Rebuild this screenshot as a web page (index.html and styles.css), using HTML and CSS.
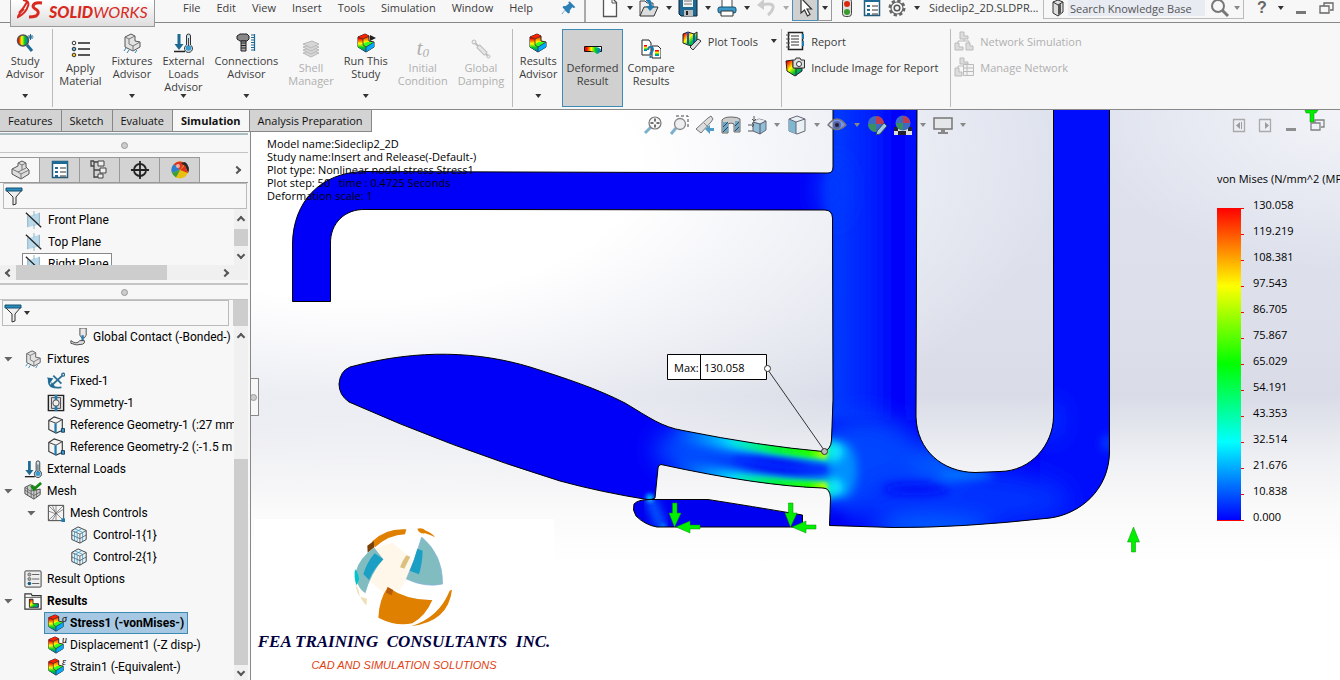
FILE: index.html
```html
<!DOCTYPE html>
<html lang="en">
<head>
    <meta charset="UTF-8">
    <meta name="viewport" content="width=device-width, initial-scale=1.0">
    <title>SOLIDWORKS - Sideclip2_2D</title>
    <link rel="stylesheet" href="styles.css">
</head>
<body>
    <!-- icon sprite -->
    <svg class="sprite" aria-hidden="true">
        <defs>
            <linearGradient id="rainbow" x1="0" y1="0" x2="1" y2="1">
                <stop offset="0.1" stop-color="#f00"/><stop offset="0.4" stop-color="#ff0"/><stop offset="0.65" stop-color="#0c2"/><stop offset="1" stop-color="#06f"/>
            </linearGradient>
            <linearGradient id="rainbow-h" x1="0" y1="0" x2="1" y2="0">
                <stop offset="0.1" stop-color="#f00"/><stop offset="0.4" stop-color="#ff0"/><stop offset="0.65" stop-color="#0c2"/><stop offset="1" stop-color="#06f"/>
            </linearGradient>
            <linearGradient id="rainbow-v" x1="0" y1="0" x2="0" y2="1">
                <stop offset="0.1" stop-color="#f00"/><stop offset="0.45" stop-color="#ff0"/><stop offset="0.7" stop-color="#0c2"/><stop offset="1" stop-color="#06f"/>
            </linearGradient>
        </defs>
        <symbol id="i-study" viewBox="0 0 20 20">
            <path d="M12 12l5 6" stroke="#1f6a94" stroke-width="3"/>
            <circle cx="8" cy="7.500" r="5.500" fill="url(#rainbow-h)" stroke="#555" stroke-width="1.500"/>
            <path d="M15.500 1v6M12.500 4h6M13.500 2l4 4M17.500 2l-4 4" stroke="#1f6a94"/>
        </symbol>
        <symbol id="i-material" viewBox="0 0 20 20">
            <path d="M8 4h12M8 10h12M8 16h12" stroke="#222" stroke-width="1.500"/>
            <circle cx="4" cy="4" r="1.800" fill="#fff" stroke="#333"/><circle cx="4" cy="10" r="1.800" fill="#5bb4e0" stroke="#333"/><circle cx="4" cy="16" r="1.800" fill="#ffc800" stroke="#333"/>
        </symbol>
        <symbol id="i-fixture" viewBox="0 0 20 20">
            <path d="M3 4l6-3 4 2v5l5 1v5l-7 4-8-4z" fill="#e2e2e2" stroke="#555"/>
            <path d="M3 4l4 2 6-3M7 6v5l4 2 7-4M11 13v5" fill="none" stroke="#777"/>
            <path d="M4 15l-2 3M7 17l-2 3M15 17l-2 3" stroke="#2d86b5"/>
        </symbol>
        <symbol id="i-loads" viewBox="0 0 20 20">
            <path d="M4.500 1h3v10h3l-4.500 6-4.500-6h3z" fill="#1f6a94"/><path d="M1 18.500h11" stroke="#222" stroke-width="1.500"/>
            <path d="M13.500 3a2 2 0 014 0v9a4 4 0 11-4 0z" fill="#cfe3ee" stroke="#333"/><circle cx="15.500" cy="15" r="2.800" fill="#3a9ccc"/><path d="M15.500 5v8" stroke="#444"/>
        </symbol>
        <symbol id="i-bolt" viewBox="0 0 20 20">
            <path d="M1 3l3-2h7l2 2v3l-2 2H4L1 6z" fill="#888" stroke="#222"/><path d="M5 8v10h5V8z" fill="#aaa" stroke="#222"/><path d="M5 10h5M5 12.500h5M5 15h5" stroke="#222"/>
            <path d="M18.500 1v17M15 2h3M15 4.500h3M15 7h3M15 9.500h3M15 12h3M15 14.500h3M15 17h3" stroke="#1f6a94" stroke-width="1.200"/>
        </symbol>
        <symbol id="i-shell" viewBox="0 0 20 20">
            <g fill="#d6d6d6" stroke="#b8b8b8"><path d="M2 14l9-3 7 3-8 4z"/><path d="M2 11l9-3 7 3-8 4z"/><path d="M2 8l9-3 7 3-8 4z"/><path d="M2 5l9-3 7 3-8 4z"/></g>
        </symbol>
        <symbol id="i-plot" viewBox="0 0 20 20">
            <path d="M2 4l7-3 4 2v5l5 1v5l-8 5-8-5z" fill="url(#rainbow-v)" stroke="#222"/>
            <path d="M2 4l7-3 4 2-6 3z" fill="#f20"/><path d="M2 4l5 2v6l3 2v5l-8-5z" fill="url(#rainbow-v)"/><path d="M7 11l4-2 7 0-8 5z" fill="#3f2"/><path d="M10 14l8-5v5l-8 5z" fill="#0af"/>
            <path d="M2 4l5 2 6-3M7 6v6l3 2 8-5M10 14v5" fill="none" stroke="#333" stroke-width="0.800"/>
        </symbol>
        <symbol id="i-run" viewBox="0 0 20 20"><use href="#i-plot"/><path d="M14 2l6 3-6 3z" fill="#222"/></symbol>
        <symbol id="i-damping" viewBox="0 0 20 20">
            <path d="M3 3l14 14" stroke="#bbb" stroke-width="2"/><path d="M7 7l8 8" stroke="#bbb" stroke-width="5"/><path d="M7.500 7.500l7 7" stroke="#e6e6e6" stroke-width="3"/><circle cx="3" cy="3" r="2" fill="#eee" stroke="#bbb"/><circle cx="17.500" cy="17.500" r="1.500" fill="#eee" stroke="#bbb"/>
        </symbol>
        <symbol id="i-deformed" viewBox="0 0 20 20">
            <path d="M1.500 7.500h17v5h-17z" fill="#fff" stroke="#111"/><path d="M2 8h9q6 0 7 3-1 3-4 4-3-3-7-3H2z" fill="url(#rainbow-h)"/>
        </symbol>
        <symbol id="i-compare" viewBox="0 0 20 20">
            <path d="M1 1h7l2 3v12H1z" fill="#fff" stroke="#222"/><path d="M3 6h3v6H3z" fill="url(#rainbow-v)"/><path d="M11 7h6l3 3v9h-9z" fill="#fff" stroke="#222"/><path d="M14 11h4v6h-4z" fill="url(#rainbow-v)"/>
            <path d="M7 11q0-3 2.500-3t2.500 2.500q0 2-2.500 3.500v2M9.500 17v2" fill="none" stroke="#1f7cb0" stroke-width="2"/>
        </symbol>
        <symbol id="i-plottools" viewBox="0 0 20 20">
            <path d="M1 3l5-2 6 2 3-2v9l-4 5-5-1-5-2z" fill="url(#rainbow)" stroke="#222"/><path d="M6 1v12M12 3v10" stroke="#1a4fd0" stroke-width="2"/>
            <path d="M8 16l8-8 3 2-8 9z" fill="#ddd" stroke="#333"/>
        </symbol>
        <symbol id="i-report" viewBox="0 0 20 20">
            <path d="M3.500 1.500h14v17h-14z" fill="#fff" stroke="#222" stroke-width="1.500"/><path d="M6 5h8M6 8h8M6 11h8M6 14h8" stroke="#333"/><path d="M1 4h4M1 8h4M1 12h4M1 16h4" stroke="#555"/><path d="M17 3h2v5h-2zM17 10h2v5h-2z" fill="#1f7cb0"/>
        </symbol>
        <symbol id="i-include" viewBox="0 0 20 20">
            <path d="M1 4l7-1v7l9 1v3l-7 5-8-5z" fill="url(#rainbow)" stroke="#222"/><path d="M8 10l3 2 6-1M11 12v7" stroke="#334" fill="none"/>
            <path d="M8 3h2l1-2h4l1 2h3.500v8H8z" fill="#ddd" stroke="#333"/><circle cx="14" cy="7" r="2.500" fill="#fff" stroke="#333"/>
        </symbol>
        <symbol id="i-network" viewBox="0 0 20 20">
            <g fill="#ddd" stroke="#bbb"><path d="M6 1h4v4h4v3H6zM1 12h4v4h4v3H1zM12 12h4v3h3v4h-7z"/><path d="M10 8v2M4 12v-2h11v2" fill="none"/></g>
        </symbol>
        <symbol id="i-managenet" viewBox="0 0 20 20">
            <g fill="#ddd" stroke="#bbb"><path d="M6 1h4v4h4v2H6zM1 11h4v4h3v4H1z"/><path d="M9.500 7.500h10v11h-10z" fill="#f3f3f3"/><path d="M10 11h9M10 14.500h9M13 8v10M4 11V9h5" fill="none"/></g>
        </symbol>
        <symbol id="i-pin" viewBox="0 0 20 20"><path d="M11 2l7 7-2 1-2-1-3 4 0 3-2 1-4-4-4 5 0-1 4-4.500-3-3 1-2 3 0 4-3-1-2z" fill="#2d7fb5"/></symbol>
        <symbol id="i-new" viewBox="0 0 20 20"><path d="M3.500 0.500h9l4 4v14h-13z" fill="#fdfdfd" stroke="#555" stroke-width="1.300"/><path d="M12 1v4h4" fill="none" stroke="#555"/></symbol>
        <symbol id="i-open" viewBox="0 0 20 20"><path d="M1 18V3h5l2 2h6v3" fill="#eee" stroke="#444"/><path d="M1 18l4-9h14l-4 9z" fill="#ddd" stroke="#333"/><path d="M7 1q6-1 6 7h3l-5 5-4-5h3q0-4-3-5z" fill="#1f7cb0"/></symbol>
        <symbol id="i-save" viewBox="0 0 20 20"><path d="M1 1h18v17H3l-2-2z" fill="#1f6a94" stroke="#123"/><path d="M5 0h10v9H5z" fill="#f2f2f2"/><path d="M6 3h8M6 6h8" stroke="#777"/><path d="M6 12h9v6H6z" fill="#bbb"/><path d="M8 13h2v4H8z" fill="#222"/></symbol>
        <symbol id="i-print" viewBox="0 0 20 20"><path d="M5 1h10v9H5z" fill="#fff" stroke="#444"/><rect x="1" y="9" width="18" height="6" rx="2" fill="#3e9aca" stroke="#14506f"/><path d="M4 13h12v5H4z" fill="#fff" stroke="#333"/></symbol>
        <symbol id="i-undo" viewBox="0 0 20 20"><path d="M5 7q13-3 12 3-1 4-5 7" fill="none" stroke="#ccc" stroke-width="3"/><path d="M1 7l7-6v11z" fill="#ccc"/></symbol>
        <symbol id="i-cursor" viewBox="0 0 20 20"><path d="M6 0v15l3.500-3 3 6 2.500-1.500-3-5.500h4.500z" fill="#fff" stroke="#333" stroke-width="1.200"/></symbol>
        <symbol id="i-traffic" viewBox="0 0 20 20"><rect x="5.500" y="0.500" width="9" height="18" rx="3" fill="#ddd" stroke="#444"/><circle cx="10" cy="6" r="3" fill="#d92a10"/><circle cx="10" cy="14" r="3" fill="#3b9b2e"/></symbol>
        <symbol id="i-list" viewBox="0 0 20 20"><path d="M2.500 1.500h15v16h-15z" fill="#fff" stroke="#245b7a" stroke-width="1.500"/><path d="M2 1h16v3H2z" fill="#1f6a94"/><path d="M5 7h3v2H5zM5 11h3v2H5zM5 15h3v2H5z" fill="#1f6a94"/><path d="M10 8h6M10 12h6M10 16h6" stroke="#333"/></symbol>
        <symbol id="i-gear" viewBox="0 0 20 20"><circle cx="10" cy="10" r="7" fill="none" stroke="#666" stroke-width="3" stroke-dasharray="3.200 2.300"/><circle cx="10" cy="10" r="6" fill="#f7f7f7" stroke="#666" stroke-width="1.200"/><circle cx="10" cy="10" r="2.800" fill="none" stroke="#555" stroke-width="1.500"/></symbol>
        <symbol id="i-book" viewBox="0 0 20 20"><path d="M5 4l5-2 5 2v10l-5 4-5-3z" fill="#ddd" stroke="#333"/><path d="M10 7v10l3-2V6z" fill="#555"/><path d="M5 4l5 3 5-3" stroke="#333" fill="none"/></symbol>
        <symbol id="i-search" viewBox="0 0 20 20"><circle cx="8" cy="8" r="6" fill="none" stroke="#777" stroke-width="2"/><path d="M12 12l6 6" stroke="#777" stroke-width="3"/></symbol>
        <symbol id="i-restore" viewBox="0 0 20 20"><path d="M8 8V5h9v7h-3" fill="none" stroke="#666" stroke-width="1.300"/><path d="M4 8h9v7H4z" fill="none" stroke="#666" stroke-width="1.300"/></symbol>
        <symbol id="i-min" viewBox="0 0 20 20"><path d="M5 13h10v3H5z" fill="#777"/></symbol>

        <!-- manager tabs -->
        <symbol id="i-part" viewBox="0 0 20 20"><path d="M2 9l6-3V3l4-2 4 2v4l3 3v4l-8 5-9-5z" fill="#dedede" stroke="#555"/><path d="M2 9l6 3 4-2V5L8 3M12 5l4-2M12 10l4-2M11 14v5M8 12l3 2 8-4" fill="none" stroke="#777"/></symbol>
        <symbol id="i-config" viewBox="0 0 20 20"><path d="M4 1v17M4 2h5M4 10h7M4 17h5M4 1H1v5h3" fill="none" stroke="#444" stroke-width="1.300"/><path d="M8 1h6v5H8zM10 8h6v5h-6zM8 14h5v4H8z" fill="#eee" stroke="#444"/></symbol>
        <symbol id="i-target" viewBox="0 0 20 20"><circle cx="10" cy="10" r="6" fill="none" stroke="#222" stroke-width="1.800"/><path d="M10 1v18M1 10h18" stroke="#222" stroke-width="1.800"/></symbol>
        <symbol id="i-ball" viewBox="0 0 20 20"><circle cx="10" cy="10" r="8.500" fill="#e8c010"/><path d="M10 10L4 4a8.500 8.500 0 00-2 9z" fill="#2a7fd0"/><path d="M10 10L4 4a8.500 8.500 0 0111-1z" fill="#dd3322"/><path d="M11 3l4-1a8.500 8.500 0 013 11q-2-7-7-10z" fill="#282828"/><path d="M10 10l5-5 3 8z" fill="#dd3322"/><path d="M2 13l8-3-4 7.500q-3-2-4-4.500z" fill="#38a038"/><circle cx="8" cy="6" r="2" fill="#fff" opacity="0.600"/></symbol>
        <symbol id="i-funnel" viewBox="0 0 20 20"><path d="M2 4h16l-6 7v7l-3 1v-8z" fill="#eee" stroke="#333"/><path d="M2 2h16v3H2z" fill="#2a8bbd" stroke="#14506f"/></symbol>

        <!-- tree icons -->
        <symbol id="i-plane" viewBox="0 0 20 20"><path d="M3 6l13-4v13L3 18z" fill="#b9d9ea"/><path d="M10 0v5M10 15v5M3 5v13M16 2v13" stroke="#8ab" fill="none"/><path d="M1 2l17 16" stroke="#222" stroke-width="1.400"/></symbol>
        <symbol id="i-contact" viewBox="0 0 20 20"><path d="M11 0h7v8l-2 3h-3l-2-3z" fill="#e8e8e8" stroke="#444"/><path d="M14 8v8" stroke="#1f7cb0" stroke-width="2.500"/><path d="M1 14q6 5 10 0h5q1 3-2 4-7 2-13-1z" fill="#ddd" stroke="#444"/></symbol>
        <symbol id="i-fixed" viewBox="0 0 20 20"><path d="M7 4l9 9M17 4L5 15" stroke="#2a7095" stroke-width="2" fill="none"/><circle cx="18" cy="3" r="1.600" fill="none" stroke="#2a7095" stroke-width="1.500"/><path d="M2 9q-1 10 14 8" stroke="#2a7095" stroke-width="2" fill="none"/><path d="M0 6l7 1-4 6zM4 17l1-6 4 5z" fill="#1f6a94"/></symbol>
        <symbol id="i-symmetry" viewBox="0 0 20 20"><path d="M1.500 1.500h17v17h-17z" fill="#ddd" stroke="#222" stroke-width="1.500"/><path d="M5 4h10v12H5z" fill="none" stroke="#444"/><path d="M10 1v18" stroke="#1f7cb0" stroke-width="3"/><circle cx="10" cy="10" r="3.500" fill="#eee" stroke="#444"/></symbol>
        <symbol id="i-refgeo" viewBox="0 0 20 20"><path d="M2 5l6-4 9 3v12l-7 3-8-4z" fill="#f4f4f4" stroke="#333" stroke-width="1.200"/><path d="M2 5l8 3 7-4" fill="none" stroke="#333"/><path d="M9.500 8v11" stroke="#1f7cb0" stroke-width="2.500"/><path d="M16 14h3.500v4H16z" fill="#3a9ccc" stroke="#135"/></symbol>
        <symbol id="i-mesh" viewBox="0 0 20 20"><path d="M1 6l6-3 5 2v4l6-1v6l-7 5-10-6z" fill="#ccc" stroke="#444"/><path d="M1 9l10 6 7-4M4 5v10M8 7v10M11 9v10M14 9v8M1 6l6 4 11-2" fill="none" stroke="#555" stroke-width="0.800"/><path d="M8 4l3 4 8-7" fill="none" stroke="#128a12" stroke-width="3"/></symbol>
        <symbol id="i-meshctl" viewBox="0 0 20 20"><path d="M1.500 1.500h17v17h-17z" fill="#f4f4f4" stroke="#333"/><path d="M2 2l16 16M18 2L2 18M10 2v16M2 8l8 3 8-5M6 2l4 9-4 7" fill="none" stroke="#666" stroke-width="0.800"/><path d="M16 16h4v4h-4z" fill="#1f7cb0"/></symbol>
        <symbol id="i-control" viewBox="0 0 20 20"><path d="M2 5l7-4 9 4v10l-7 4-9-4z" fill="#eaf3f8" stroke="#333"/><path d="M2 5l9 4 7-4M11 9v10M2 10l9 4 7-4" fill="none" stroke="#444" stroke-width="0.800"/><path d="M5 6v10M8 8v9M14 7v10M5 3l9 4M13 3L6 7" stroke="#2d8fc2" fill="none" stroke-width="0.800"/></symbol>
        <symbol id="i-options" viewBox="0 0 20 20"><rect x="1" y="1" width="18" height="18" rx="1" fill="#eee" stroke="#333"/><path d="M9 5h8M9 10h8M9 15h8" stroke="#555"/><circle cx="6" cy="5" r="1.700" fill="#aaa" stroke="#555" stroke-width="0.800"/><circle cx="6" cy="10" r="1.700" fill="#aaa" stroke="#555" stroke-width="0.800"/><circle cx="6" cy="15" r="2" fill="#155a82"/></symbol>
        <symbol id="i-results" viewBox="0 0 20 20"><path d="M1 2h7l1 2h10v15H1z" fill="#fafafa" stroke="#333" stroke-width="1.300"/><path d="M1 6h18" stroke="#555"/><path d="M6 8h4v5h6v4H6z" fill="url(#rainbow)" stroke="#222"/></symbol>

        <!-- heads-up view toolbar -->
        <symbol id="i-zoomfit" viewBox="0 0 20 20"><path d="M8 12l-6 6" stroke="#7db0cc" stroke-width="3"/><circle cx="12" cy="8" r="6" fill="#f6f6f6" stroke="#777" stroke-width="1.200"/><path d="M12 3.500v3M12 9.500v3M7.500 8h3M13.500 8h3" stroke="#444" stroke-width="1.500"/></symbol>
        <symbol id="i-zoomarea" viewBox="0 0 20 20"><path d="M7 1h12v12" fill="none" stroke="#444" stroke-dasharray="3 2"/><path d="M7 13l-5 6" stroke="#7db0cc" stroke-width="3"/><circle cx="11" cy="9" r="5.500" fill="#eee" stroke="#888" stroke-width="1.300"/></symbol>
        <symbol id="i-prev" viewBox="0 0 20 20"><path d="M1 14L13 3l3-2 2 3-2 3L6 18z" fill="#ddd" stroke="#777"/><path d="M9 8l4 4" stroke="#888"/><path d="M10 14l5-4v3h4v3h-4v3z" fill="#4f9cc4"/></symbol>
        <symbol id="i-section" viewBox="0 0 20 20"><path d="M1 5q2-3 9-3t9 2v13h-6V9q-3-2-6 0v9H1z" fill="#ccc" stroke="#666"/><path d="M2 7h5v10H2zM14 6h4v10h-4z" fill="#6aa9c9"/><path d="M2 12l5-5M2 17l5-5M14 11l4-4M14 16l4-4" stroke="#345"/></symbol>
        <symbol id="i-orient" viewBox="0 0 20 20"><path d="M6 7l6-3 7 2v9l-6 4-7-3z" fill="#8fbfd8" stroke="#667"/><path d="M6 7l6-3 7 2-6 3z" fill="#e8eff3"/><path d="M6 7l7 2 6-3M13 9v10" fill="none" stroke="#556"/><path d="M7 1v5M1 10h6M1 16h5M5 4l2 2 2-2M5 8l2 2-2 2" fill="none" stroke="#555"/></symbol>
        <symbol id="i-display" viewBox="0 0 20 20"><path d="M2 4l8-3 8 3v12l-8 3-8-3z" fill="#eaf1f5" stroke="#667"/><path d="M2 4l7 3v12l-7-3z" fill="#7fb6d2"/><path d="M2 4l7 3 9-3M9 7v12" fill="none" stroke="#667"/></symbol>
        <symbol id="i-eye" viewBox="0 0 20 20"><path d="M1 10q9-12 18 0-9 9-18 0z" fill="#c9cfe6" fill-opacity="0.600" stroke="#777" stroke-width="1.300"/><circle cx="10" cy="10" r="4" fill="#56a"/><circle cx="10" cy="10" r="2" fill="#223"/></symbol>
        <symbol id="i-appearance" viewBox="0 0 20 20"><circle cx="9" cy="9" r="8" fill="#3d6ac2"/><path d="M9 9V1a8 8 0 018 8z" fill="#c03a50"/><path d="M9 9H1a8 8 0 008 8z" fill="#3a8f60"/><path d="M10 16l7-8 3 3-7 8-4 1z" fill="#9ecbe0" stroke="#345"/></symbol>
        <symbol id="i-scene" viewBox="0 0 20 20"><path d="M1 12h18v8H1z" fill="#ddd"/><path d="M1 12h4v4H1zM9 16h4v4H9zM15 12h4v4h-4zM5 16h4v4H5z" fill="#223"/><circle cx="10" cy="8" r="7.500" fill="#3d6ac2"/><path d="M10 8V1a7 7 0 017 7z" fill="#c03a50"/><path d="M10 8H3a7 7 0 007 7z" fill="#3a8f60"/></symbol>
        <symbol id="i-monitor" viewBox="0 0 20 20"><path d="M1 3h18v11H1z" fill="#e4e6ea" stroke="#777" stroke-width="1.500"/><path d="M8 14h4v3H8zM5 17h10v2H5z" fill="#888"/></symbol>
        <symbol id="i-paneleft" viewBox="0 0 20 20"><path d="M4.500 4.500h11v12h-11z" fill="none" stroke="#999" stroke-width="1.300"/><path d="M11 7v7l-4-3.500zM12 7h1v7h-1z" fill="#888"/></symbol>
        <symbol id="i-paneright" viewBox="0 0 20 20"><path d="M4.500 4.500h11v12h-11z" fill="none" stroke="#999" stroke-width="1.300"/><path d="M10 7v7l4-3.500z" fill="#888"/></symbol>
    </svg>

    <header class="titlebar">
        <a class="logo" href="#" aria-label="SOLIDWORKS">
            <svg class="logo-mark" viewBox="0 0 28 22" aria-hidden="true">
                <path d="M6 0q7 1 5 6-2 7-10 11 1-4 6-8M10 2q-3 6-8 11" fill="none" stroke="#d8291f" stroke-width="2"/>
                <path d="M25 3q-8-1-9 3 0 2 4 4 3 3-1 6-3 1-7 1" fill="none" stroke="#d8291f" stroke-width="3"/>
            </svg>
            <span class="logo-text"><b>SOLID</b>WORKS</span>
        </a>
        <nav class="menu">
            <a href="#">File</a><a href="#">Edit</a><a href="#">View</a><a href="#">Insert</a><a href="#">Tools</a><a href="#">Simulation</a><a href="#">Window</a><a href="#">Help</a>
        </nav>
        <button class="tool pin" aria-label="Pin menu"><svg class="icon small"><use href="#i-pin"/></svg></button>
        <div class="quick">
            <button class="tool" aria-label="New"><svg class="icon"><use href="#i-new"/></svg><span class="caret"></span></button>
            <button class="tool" aria-label="Open"><svg class="icon"><use href="#i-open"/></svg><span class="caret"></span></button>
            <button class="tool" aria-label="Save"><svg class="icon"><use href="#i-save"/></svg><span class="caret"></span></button>
            <button class="tool" aria-label="Print"><svg class="icon"><use href="#i-print"/></svg><span class="caret"></span></button>
            <button class="tool" aria-label="Undo"><svg class="icon"><use href="#i-undo"/></svg><span class="caret light"></span></button>
            <div class="select-tool">
                <button class="tool pressed" aria-label="Select"><svg class="icon"><use href="#i-cursor"/></svg></button>
                <button class="tool select-more" aria-label="Select options"><span class="caret"></span></button>
            </div>
            <button class="tool" aria-label="Rebuild"><svg class="icon"><use href="#i-traffic"/></svg></button>
            <button class="tool" aria-label="File properties"><svg class="icon"><use href="#i-list"/></svg></button>
            <button class="tool" aria-label="Options"><svg class="icon"><use href="#i-gear"/></svg><span class="caret"></span></button>
        </div>
        <span class="doc-name">Sideclip2_2D.SLDPR...</span>
        <div class="search">
            <svg class="icon"><use href="#i-book"/></svg>
            <input type="text" placeholder="Search Knowledge Base" aria-label="Search Knowledge Base">
            <button class="tool" aria-label="Search"><svg class="icon"><use href="#i-search"/></svg><span class="caret gray"></span></button>
        </div>
        <button class="tool help" aria-label="Help">?<span class="caret"></span></button>
        <button class="tool" aria-label="Minimize"><svg class="icon"><use href="#i-min"/></svg></button>
        <button class="tool" aria-label="Restore"><svg class="icon"><use href="#i-restore"/></svg></button>
    </header>

    <div class="ribbon">
        <div class="group">
            <button class="cmd drop"><svg class="icon"><use href="#i-study"/></svg><span>Study<br>Advisor</span><i class="caret"></i></button>
        </div>
        <div class="group">
            <button class="cmd"><svg class="icon"><use href="#i-material"/></svg><span>Apply<br>Material</span></button>
            <button class="cmd drop"><svg class="icon"><use href="#i-fixture"/></svg><span>Fixtures<br>Advisor</span><i class="caret"></i></button>
            <button class="cmd drop"><svg class="icon"><use href="#i-loads"/></svg><span>External<br>Loads<br>Advisor</span><i class="caret"></i></button>
            <button class="cmd drop"><svg class="icon"><use href="#i-bolt"/></svg><span>Connections<br>Advisor</span><i class="caret"></i></button>
            <button class="cmd" disabled><svg class="icon"><use href="#i-shell"/></svg><span>Shell<br>Manager</span></button>
            <button class="cmd drop"><svg class="icon"><use href="#i-run"/></svg><span>Run This<br>Study</span><i class="caret"></i></button>
            <button class="cmd" disabled><em class="glyph">t<sub>0</sub></em><span>Initial<br>Condition</span></button>
            <button class="cmd" disabled><svg class="icon"><use href="#i-damping"/></svg><span>Global<br>Damping</span></button>
        </div>
        <div class="group plots">
            <button class="cmd drop"><svg class="icon"><use href="#i-plot"/></svg><span>Results<br>Advisor</span><i class="caret"></i></button>
            <button class="cmd active"><svg class="icon"><use href="#i-deformed"/></svg><span>Deformed<br>Result</span></button>
            <button class="cmd"><svg class="icon"><use href="#i-compare"/></svg><span>Compare<br>Results</span></button>
            <div class="stack">
                <button class="line"><svg class="icon"><use href="#i-plottools"/></svg>Plot Tools<span class="caret"></span></button>
            </div>
        </div>
        <div class="group report">
            <div class="stack">
                <button class="line"><svg class="icon"><use href="#i-report"/></svg>Report</button>
                <button class="line"><svg class="icon"><use href="#i-include"/></svg>Include Image for Report</button>
            </div>
        </div>
        <div class="group">
            <div class="stack">
                <button class="line" disabled><svg class="icon"><use href="#i-network"/></svg>Network Simulation</button>
                <button class="line" disabled><svg class="icon"><use href="#i-managenet"/></svg>Manage Network</button>
            </div>
        </div>
    </div>

    <main class="workspace">
        <nav class="tabs">
            <a href="#">Features</a><a href="#">Sketch</a><a href="#">Evaluate</a><a class="current" href="#">Simulation</a><a href="#">Analysis Preparation</a>
        </nav>

        <aside class="manager">
            <div class="grip top"><i class="dot"></i></div>
            <div class="manager-tabs">
                <button class="current" aria-label="Feature tree"><svg class="icon"><use href="#i-part"/></svg></button>
                <button aria-label="Properties"><svg class="icon"><use href="#i-list"/></svg></button>
                <button aria-label="Configurations"><svg class="icon"><use href="#i-config"/></svg></button>
                <button aria-label="Dimensions"><svg class="icon"><use href="#i-target"/></svg></button>
                <button aria-label="Display"><svg class="icon"><use href="#i-ball"/></svg></button>
                <span class="more"><i class="chev right"></i></span>
            </div>
            <div class="filter first"><svg class="icon"><use href="#i-funnel"/></svg></div>
            <div class="pane feature-pane">
                <ul class="tree">
                    <li><span class="row"><svg class="icon"><use href="#i-plane"/></svg>Front Plane</span></li>
                    <li><span class="row"><svg class="icon"><use href="#i-plane"/></svg>Top Plane</span></li>
                    <li><span class="row hover"><svg class="icon"><use href="#i-plane"/></svg>Right Plane</span></li>
                </ul>
                <div class="scroll"><i class="chev up"></i><i class="thumb"></i><i class="chev down"></i></div>
            </div>
            <div class="hscroll"><i class="chev left"></i><i class="thumb"></i><i class="chev right"></i></div>
            <div class="grip"><i class="dot"></i></div>
            <div class="filter-row">
                <div class="filter"><svg class="icon"><use href="#i-funnel"/></svg><span class="caret"></span></div>
                <i class="stub"></i>
            </div>
            <div class="pane study-pane">
                <ul class="tree">
                    <li><ul><li><ul><li><span class="row"><i class="twisty"></i><svg class="icon"><use href="#i-contact"/></svg>Global Contact (-Bonded-)</span></li></ul></li></ul></li>
                    <li>
                        <span class="row"><i class="twisty open"></i><svg class="icon"><use href="#i-fixture"/></svg>Fixtures</span>
                        <ul>
                            <li><span class="row"><i class="twisty"></i><svg class="icon"><use href="#i-fixed"/></svg>Fixed-1</span></li>
                            <li><span class="row"><i class="twisty"></i><svg class="icon"><use href="#i-symmetry"/></svg>Symmetry-1</span></li>
                            <li><span class="row"><i class="twisty"></i><svg class="icon"><use href="#i-refgeo"/></svg>Reference Geometry-1 (:27 mm</span></li>
                            <li><span class="row"><i class="twisty"></i><svg class="icon"><use href="#i-refgeo"/></svg>Reference Geometry-2 (:-1.5 m</span></li>
                        </ul>
                    </li>
                    <li><span class="row"><i class="twisty"></i><svg class="icon"><use href="#i-loads"/></svg>External Loads</span></li>
                    <li>
                        <span class="row"><i class="twisty open"></i><svg class="icon"><use href="#i-mesh"/></svg>Mesh</span>
                        <ul>
                            <li>
                                <span class="row"><i class="twisty open"></i><svg class="icon"><use href="#i-meshctl"/></svg>Mesh Controls</span>
                                <ul>
                                    <li><span class="row"><i class="twisty"></i><svg class="icon"><use href="#i-control"/></svg>Control-1{1}</span></li>
                                    <li><span class="row"><i class="twisty"></i><svg class="icon"><use href="#i-control"/></svg>Control-2{1}</span></li>
                                </ul>
                            </li>
                        </ul>
                    </li>
                    <li><span class="row"><i class="twisty"></i><svg class="icon"><use href="#i-options"/></svg>Result Options</span></li>
                    <li>
                        <span class="row bold"><i class="twisty open"></i><svg class="icon"><use href="#i-results"/></svg>Results</span>
                        <ul>
                            <li><span class="row"><i class="twisty"></i><span class="picked"><svg class="icon"><use href="#i-plot"/></svg><sup>σ</sup>Stress1 (-vonMises-)</span></span></li>
                            <li><span class="row"><i class="twisty"></i><svg class="icon"><use href="#i-plot"/></svg><sup>u</sup>Displacement1 (-Z disp-)</span></li>
                            <li><span class="row"><i class="twisty"></i><svg class="icon"><use href="#i-plot"/></svg><sup>ε</sup>Strain1 (-Equivalent-)</span></li>
                        </ul>
                    </li>
                </ul>
                <div class="scroll"><i class="chev up"></i><i class="thumb"></i><i class="chev down"></i></div>
            </div>
        </aside>

        <section class="viewport">
            <svg class="model" viewBox="250 110 1090 570" preserveAspectRatio="xMinYMin slice" role="img" aria-label="Nonlinear stress plot">
                <defs>
                    <path id="clip-body" d="M292.500 301.500V244C293 202 320 172 365 171.500L828 173Q833 173 833 167V105H917L916 417C917 450 942 472 975 472.500L1000 471.500C1032 471 1053 444 1053.500 417V105H1109.500V452C1109 490 1080 514 1050 518Q960 528 893 527.500L829.500 525.500L830.500 498Q830 488 823 488Q760 486 661 464.500Q658 465 658 468L655 498L650 500Q600 492 560 481Q450 447 349 402Q339 395 339 384Q340 371 350 367C420 348 480 352 530 367C565 378 598 389 625 403C650 418 662 427 683 430.500Q760 446 823 451.500Q831 450 831.500 440L833 400L832.500 218Q832 210 825 210L462 209.500H365C345 209 330 223 330.500 244V301.500Z"/>
                    <path id="latch" d="M650 499.500H708Q750 506 802.500 515V527H657Q645 525 636 516Q632 510 634 504Q638 499.500 650 499.500Z"/>
                    <clipPath id="in-body"><use href="#clip-body"/></clipPath>
                    <clipPath id="in-latch"><use href="#latch"/></clipPath>
                    <filter id="soft2" x="-50%" y="-50%" width="200%" height="200%"><feGaussianBlur stdDeviation="2"/></filter>
                    <filter id="soft5" x="-50%" y="-50%" width="200%" height="200%"><feGaussianBlur stdDeviation="5"/></filter>
                    <filter id="soft12" x="-50%" y="-50%" width="200%" height="200%"><feGaussianBlur stdDeviation="12"/></filter>
                    <linearGradient id="column" x1="0" x2="1" y1="0" y2="0">
                        <stop offset="0" stop-color="#0040ff"/><stop offset="0.450" stop-color="#0020ff"/><stop offset="0.700" stop-color="#0000fa"/><stop offset="1" stop-color="#0014ff"/>
                    </linearGradient>
                    <linearGradient id="cyan-run" gradientUnits="userSpaceOnUse" x1="670" x2="825" y1="0" y2="0">
                        <stop offset="0" stop-color="#0af" stop-opacity="0"/><stop offset="0.400" stop-color="#00e0ff"/><stop offset="1" stop-color="#0fc"/>
                    </linearGradient>
                    <linearGradient id="green-run" gradientUnits="userSpaceOnUse" x1="725" x2="825" y1="0" y2="0">
                        <stop offset="0" stop-color="#0f8" stop-opacity="0"/><stop offset="0.500" stop-color="#00f040"/><stop offset="0.850" stop-color="#2f0"/><stop offset="1" stop-color="#c0ff00"/>
                    </linearGradient>
                </defs>
                <g clip-path="url(#in-body)">
                    <rect x="280" y="100" width="840" height="440" fill="#0000f8"/>
                    <g filter="url(#soft5)">
                        <rect x="826" y="60" width="100" height="360" fill="url(#column)"/>
                        <rect x="1040" y="60" width="90" height="480" fill="#0008fc"/>
                    </g>
                    <g filter="url(#soft12)">
                        <ellipse cx="865" cy="465" rx="60" ry="50" fill="#0044ff"/>
                        <ellipse cx="965" cy="500" rx="105" ry="30" fill="#0030ff"/>
                        <ellipse cx="940" cy="462" rx="26" ry="14" fill="#0068ff"/>
                        <ellipse cx="930" cy="532" rx="60" ry="10" fill="#0070ff"/>
                        <ellipse cx="705" cy="450" rx="50" ry="24" fill="#0050ff"/>
                        <ellipse cx="1052" cy="420" rx="8" ry="20" fill="#0040ff"/>
                        <ellipse cx="832" cy="190" rx="14" ry="32" fill="#0038ff"/>
                    </g>
                    <g filter="url(#soft5)">
                        <ellipse cx="916" cy="489" rx="34" ry="6" fill="#0010f8"/>
                        <ellipse cx="843" cy="470" rx="14" ry="28" fill="#0090ff"/>
                        <ellipse cx="834" cy="451" rx="9" ry="10" fill="#0ce8ff"/>
                        <ellipse cx="834" cy="488" rx="9" ry="9" fill="#0ce8ff"/>
                        <ellipse cx="836" cy="522" rx="8" ry="8" fill="#0000f0"/>
                        <ellipse cx="966" cy="475" rx="28" ry="4" fill="#0084ff"/>
                        <ellipse cx="1107" cy="443" rx="4" ry="8" fill="#0050ff"/>
                    </g>
                    <g fill="none" filter="url(#soft5)" stroke="url(#cyan-run)">
                        <path d="M670 430Q760 446 832 452" stroke-width="20"/>
                        <path d="M670 467Q760 486 832 489" stroke-width="18"/>
                    </g>
                    <g fill="none" filter="url(#soft2)" stroke="url(#green-run)">
                        <path d="M725 440Q770 448 827 453" stroke-width="12"/>
                        <path d="M735 479Q780 486 827 488" stroke-width="11"/>
                    </g>
                    <path d="M735 459Q790 470 826 469" fill="none" stroke="#0030ff" stroke-opacity="0.800" stroke-width="6" filter="url(#soft2)"/>
                    <circle cx="650" cy="498" r="4" fill="#00c8ff" filter="url(#soft2)"/>
                </g>
                <use href="#clip-body" fill="none" stroke="#000"/>
                <g clip-path="url(#in-latch)">
                    <use href="#latch" fill="#0000f0"/>
                    <path d="M650 498l12 30" stroke="#0060ff" stroke-width="10" filter="url(#soft5)"/>
                    <circle cx="650" cy="499" r="3" fill="#3df" filter="url(#soft2)"/><circle cx="663" cy="527" r="3" fill="#09f" filter="url(#soft2)"/>
                </g>
                <use href="#latch" fill="none" stroke="#000"/>
                <g class="loads">
                    <path id="load-arrow" d="M672.500 503h4.500v10h4L674.500 527 669 513h3.500z"/>
                    <path d="M676 527l14-6v4h10v4H690v4z"/>
                    <use href="#load-arrow" x="116"/>
                    <path d="M792 527l14-6v4h10v4H806v4z"/>
                    <path d="M1133.500 527l6 15h-4v10h-4v-10h-4z"/>
                    <path d="M1305 110h13l-2 3h-2v9h-4v-9h-4z"/>
                </g>
                <g class="callout">
                    <path d="M768 370L824 450"/>
                    <path class="box" d="M667.500 354.500h99v25h-99zM700.500 354.500v25"/>
                    <circle cx="767.500" cy="368.500" r="3"/><circle class="hit" cx="824.500" cy="451.500" r="3"/>
                    <text x="674" y="372">Max:</text><text x="704" y="372">130.058</text>
                </g>
            </svg>

            <div class="plot-info">
                <p>Model name:Sideclip2_2D</p>
                <p>Study name:Insert and Release(-Default-)</p>
                <p>Plot type: Nonlinear nodal stress Stress1</p>
                <p>Plot step: 50 &nbsp; time : 0.4725 Seconds</p>
                <p>Deformation scale: 1</p>
            </div>

            <div class="hud">
                <button aria-label="Zoom to fit"><svg class="icon"><use href="#i-zoomfit"/></svg></button>
                <button aria-label="Zoom to area"><svg class="icon"><use href="#i-zoomarea"/></svg></button>
                <button aria-label="Previous view"><svg class="icon"><use href="#i-prev"/></svg></button>
                <button aria-label="Section view"><svg class="icon"><use href="#i-section"/></svg></button>
                <button aria-label="View orientation"><svg class="icon"><use href="#i-orient"/></svg><span class="caret gray"></span></button>
                <button aria-label="Display style"><svg class="icon"><use href="#i-display"/></svg><span class="caret gray"></span></button>
                <button aria-label="Hide items"><svg class="icon"><use href="#i-eye"/></svg><span class="caret gray"></span></button>
                <button aria-label="Edit appearance"><svg class="icon"><use href="#i-appearance"/></svg></button>
                <button aria-label="Apply scene"><svg class="icon"><use href="#i-scene"/></svg><span class="caret gray"></span></button>
                <button aria-label="View settings"><svg class="icon"><use href="#i-monitor"/></svg><span class="caret gray"></span></button>
            </div>

            <div class="window-buttons">
                <button aria-label="Expand left"><svg class="icon"><use href="#i-paneleft"/></svg></button>
                <button aria-label="Expand right"><svg class="icon"><use href="#i-paneright"/></svg></button>
                <button aria-label="Minimize document"><svg class="icon"><use href="#i-min"/></svg></button>
                <button aria-label="Restore document"><svg class="icon"><use href="#i-restore"/></svg></button>
            </div>

            <div class="legend">
                <h2>von Mises (N/mm^2 (MPa))</h2>
                <div class="legend-body">
                    <div class="bar"></div>
                    <ol>
                        <li>130.058</li><li>119.219</li><li>108.381</li><li>97.543</li><li>86.705</li><li>75.867</li><li>65.029</li><li>54.191</li><li>43.353</li><li>32.514</li><li>21.676</li><li>10.838</li><li>0.000</li>
                    </ol>
                </div>
            </div>

            <div class="sponsor">
                <svg class="globe" viewBox="300 72 330 318" aria-hidden="true">
                    <path d="M378 145L430 128 475 165 490 180 472 240 450 272 415 262 405 280 360 240 403 178z" fill="#fff8ea"/>
                    <path d="M370 124Q410 84 472 88L468 103Q420 104 378 142z" fill="#df8000"/>
                    <path d="M355 137L374 123 376 142 356 158z" fill="#7a3f05"/>
                    <path d="M356 158L376 143 403 178Q366 220 349 280 330 268 318 235 317 195 356 158z" fill="#80bcc0"/>
                    <path d="M377 160L403 178Q375 205 360 240L343 222Q355 185 377 160z" fill="#1c9fc4"/>
                    <path d="M318 208q10 10 12 30-4 12-8 18-8-24-4-48z" fill="#00c4cc"/>
                    <path d="M319 250q4 30 14 40-2-20-14-40zM334 290q10 20 18 26l2-20z" fill="#efe0b8"/>
                    <path d="M505 86q14-4 26 6 18 6 27 20-14-8-30-12-18 2-23-14z" fill="#df8000"/>
                    <path d="M518 111Q582 165 581 252 530 264 472 237 500 175 518 111z" fill="#80bcc0" stroke="#8ab4e0" stroke-width="2"/>
                    <path d="M505 146L521 152Q520 190 510 223L482 212Q496 180 505 146z" fill="#1c9fc4"/>
                    <path d="M472 166L484 170 466 206 453 202Q460 182 472 166z" fill="#dcc080"/>
                    <path d="M416 262Q475 302 550 300 530 348 490 370 440 380 388 353 390 300 416 262z" fill="#df8000"/>
                    <path d="M416 261L433 270 428 286 411 278z" fill="#b85a0c"/>
                    <path d="M602 272l7-3Q598 365 487 378 570 352 602 272z" fill="#df8000"/>
                </svg>
                <strong>FEA TRAINING &nbsp;CONSULTANTS &nbsp;INC.</strong>
                <span>CAD AND SIMULATION SOLUTIONS</span>
            </div>

            <button class="flyout" aria-label="Collapse panel"><i class="dot"></i></button>
        </section>
    </main>
</body>
</html>
```
FILE: styles.css
```css
* {
    box-sizing: border-box;
}
body {
    margin: 0;
    height: 100vh;
    display: flex;
    flex-direction: column;
    overflow: hidden;
    font-family: 'Open Sans', 'Noto Sans', sans-serif;
    font-size: 11px;
    color: #3c3c3c;
    background: #f7f7f7;
}
a {
    color: inherit;
    text-decoration: none;
}
button {
    font: inherit;
    color: inherit;
    background: none;
    border: 0;
    padding: 0;
}
ul, ol {
    list-style: none;
    margin: 0;
    padding: 0;
}
.sprite {
    position: absolute;
    width: 0;
    height: 0;
}
.icon {
    width: 20px;
    height: 20px;
    flex: none;
}
.icon.small {
    width: 16px;
    height: 16px;
}
.caret {
    flex: none;
    width: 8px;
    height: 4px;
    background: #333;
    clip-path: polygon(1px 0, 7px 0, 4px 4px);
}
.caret.gray {
    background: #888;
}
.caret.light {
    background: #aaa;
}
.dot {
    width: 7px;
    height: 7px;
    border-radius: 50%;
    border: 1px solid #999;
    background: #ccc;
}

/* title bar */
.titlebar {
    flex: none;
    display: flex;
    align-items: flex-start;
    height: 23px;
    border-bottom: 1px solid #888;
    white-space: nowrap;
}
.titlebar > * {
    height: 16px;
    flex: none;
}
.titlebar > .logo {
    position: relative;
    z-index: 2;
    display: flex;
    align-items: flex-start;
    width: 145px;
    height: 27px;
    margin-left: 10px;
    padding-left: 6px;
    border: 1px solid #999;
    border-top: 0;
    background: linear-gradient(#fff, #dedede);
    color: #d8291f;
}
.logo-mark {
    width: 28px;
    height: 22px;
}
.logo-text {
    margin-left: 4px;
    font-family: Lato, sans-serif;
    font-size: 16px;
    line-height: 23px;
    font-style: italic;
}
.logo-text b {
    font-weight: 900;
}
.menu {
    display: flex;
    gap: 16px;
    margin-left: 28px;
    line-height: 16px;
}
.tool {
    display: flex;
    align-items: center;
    gap: 6px;
    height: 16px;
}
.pin {
    margin-left: 28px;
}
.titlebar > .quick {
    display: flex;
    gap: 5px;
    height: 22px;
    margin-left: 7px;
    padding-left: 14px;
    border-left: 2px solid #aaa;
}
.select-tool {
    display: flex;
    margin-left: -3px;
}
.select-tool .tool {
    height: 21px;
    padding: 0 2px 4px;
    border: 1px solid #999;
    border-top: 0;
}
.select-tool .pressed {
    border-color: #4a90b8;
    background: #d0d0d0;
}
.doc-name {
    margin-left: 8px;
    line-height: 16px;
    width: 114px;
}
.titlebar > .search {
    display: flex;
    height: 19px;
    width: 201px;
    padding-left: 4px;
    border: 1px solid #bbb;
    border-top: 0;
}
.search > .icon {
    margin: -2px 0 0;
}
.search input {
    flex: 1;
    min-width: 0;
    height: 16px;
    padding: 0 2px;
    border: 0;
    background: #e8ebf2;
    font: inherit;
}
.search input::placeholder {
    color: #555;
}
.search .tool {
    margin: 0 2px 0 5px;
    gap: 3px;
}
.help {
    width: 34px;
    margin: 0 0 0 13px;
    font-family: 'Liberation Sans', sans-serif;
    font-size: 16px;
    line-height: 16px;
    font-weight: 700;
    color: #666;
    gap: 10px;
}
.help + .tool + .tool {
    margin-left: 5px;
}

/* ribbon */
.ribbon {
    flex: none;
    display: flex;
    height: 87px;
    padding-top: 6px;
    border-bottom: 1px solid #888;
}
.group {
    display: flex;
    flex: none;
    height: 78px;
    padding: 0 3px 0 1px;
    border-right: 1px solid #bbb;
}
.group:last-child {
    border-right: 0;
}
.cmd {
    display: flex;
    flex: none;
    flex-direction: column;
    align-items: center;
    gap: 2px;
    padding: 10px 5px 0;
    line-height: 13px;
    text-align: center;
    white-space: nowrap;
}
.cmd.drop {
    gap: 1px;
    padding: 4px 5px 9px;
}
.cmd.drop .caret {
    margin-top: auto;
}
.cmd.active {
    padding: 9px 3px 0;
    border: 1px solid #3c8bb5;
    background: #d0d0d0;
}
.cmd:disabled, .line:disabled {
    color: #b0b0b0;
}
.glyph {
    height: 20px;
    font: italic 22px/18px 'Liberation Serif', serif;
}
.glyph sub {
    font-size: 13px;
    line-height: 0;
    vertical-align: -2px;
}
.stack {
    display: flex;
    flex-direction: column;
    gap: 6px;
    padding: 2px 0 0 2px;
}
.line {
    display: flex;
    align-items: center;
    gap: 6px;
    height: 20px;
    white-space: nowrap;
}
.line .caret {
    margin-left: 6px;
}
.plots {
    width: 269px;
}
.report {
    padding-right: 12px;
}

/* command tabs */
.workspace {
    position: relative;
    flex: 1;
    min-height: 0;
    display: flex;
}
.tabs {
    position: absolute;
    top: 0;
    left: 0;
    z-index: 3;
    display: flex;
    line-height: 21px;
    color: #111;
    border-bottom: 1px solid #888;
}
.tabs a {
    padding: 0 8px;
    border-right: 1px solid #888;
    background: #d3d3d3;
}
.tabs .current {
    background: #f7f7f7;
    font-weight: 700;
}

/* manager panel */
.manager {
    flex: none;
    display: flex;
    flex-direction: column;
    width: 251px;
    padding: 23px 2px 0 0;
    border-right: 1px solid #888;
    font-family: Roboto, 'Open Sans', sans-serif;
    font-size: 12px;
    color: #000;
}
.grip {
    flex: none;
    display: flex;
    align-items: center;
    justify-content: center;
    height: 17px;
    border-top: 2px solid #c4c4c4;
    border-bottom: 1px solid #c4c4c4;
}
.grip.top {
    height: 20px;
    padding-top: 3px;
    border-top-color: #a9bcc0;
}
.manager-tabs {
    flex: none;
    display: flex;
    margin-top: 4px;
    border-bottom: 1px solid #999;
}
.manager-tabs button {
    display: flex;
    align-items: center;
    justify-content: center;
    width: 40px;
    height: 25px;
    border: 1px solid #999;
    border-width: 1px 1px 0 0;
    background: #d3d3d3;
}
.manager-tabs .current {
    background: #f7f7f7;
    margin-bottom: -1px;
}
.more {
    display: flex;
    align-items: center;
    margin-left: auto;
    padding-right: 8px;
}
.filter {
    display: flex;
    align-items: center;
    height: 26px;
    flex: 1;
    border: 1px solid #bbb;
}
.filter.first {
    flex: none;
    margin: 0 1px 0 3px;
}
.filter-row {
    flex: none;
    display: flex;
    gap: 4px;
    padding-left: 2px;
}
.stub {
    width: 15px;
    background: #cdcdcd;
}
.pane {
    display: flex;
    min-height: 0;
    overflow: hidden;
}
.feature-pane {
    flex: none;
    height: 56px;
}
.study-pane {
    flex: 1;
}
.tree {
    flex: 1;
    min-width: 0;
    overflow: hidden;
}
.tree ul {
    padding-left: 23px;
}
.row {
    display: flex;
    align-items: center;
    height: 22px;
    gap: 5px;
    white-space: nowrap;
}
.row .icon {
    width: 18px;
    height: 18px;
}
.feature-pane .row {
    width: max-content;
    padding: 0 3px;
    margin-left: 22px;
}
.feature-pane .row.hover {
    border: 1px solid #888;
    background: #fff;
    padding: 0 2px;
}
.row.bold, .picked {
    font-weight: 700;
}
.twisty {
    flex: none;
    width: 24px;
    height: 5px;
    margin-right: -5px;
}
.twisty.open {
    background: #666;
    clip-path: polygon(4px 0, 13px 0, 8px 5px);
}
.row sup {
    width: 8px;
    margin: 0 -5px 0 -8px;
    font: italic 10px/12px 'Liberation Serif', serif;
    align-self: flex-start;
}
.picked {
    display: flex;
    align-items: center;
    gap: 5px;
    height: 22px;
    margin-left: -3px;
    padding: 0 3px 0 2px;
    border: 1px solid #3c8bb5;
    background: #a6c8e2;
}
.scroll {
    flex: none;
    display: flex;
    flex-direction: column;
    align-items: center;
    width: 14px;
    background: #f0f0f0;
}
.thumb {
    background: #cdcdcd;
}
.scroll .thumb {
    width: 14px;
}
.feature-pane .scroll {
    justify-content: space-between;
    padding: 6px 0 5px;
}
.feature-pane .thumb {
    height: 17px;
}
.study-pane .scroll {
    padding: 6px 0 3px;
}
.study-pane .thumb {
    flex: 1;
    margin: 121px 0 6px;
}
.chev {
    flex: none;
    width: 6px;
    height: 6px;
    border: solid #555;
    border-width: 2px 2px 0 0;
}
.chev.up {
    transform: translateY(2px) rotate(-45deg);
}
.chev.down {
    transform: translateY(-2px) rotate(135deg);
}
.chev.left {
    transform: rotate(-135deg);
}
.chev.right {
    transform: rotate(45deg);
}
.hscroll {
    flex: none;
    display: flex;
    align-items: center;
    height: 15px;
    margin-bottom: 3px;
    padding: 0 20px 0 6px;
    background: #f0f0f0;
}
.hscroll .thumb {
    width: 151px;
    height: 15px;
    margin: 0 auto 0 4px;
}

/* graphics area */
.viewport {
    position: relative;
    flex: 1;
    min-width: 0;
    overflow: hidden;
    background:
        radial-gradient(ellipse 700px 330px at 10% 10%, #fff 40%, rgba(255, 255, 255, 0)),
        radial-gradient(ellipse 260px 160px at 100% 0, rgba(255, 255, 255, 0.6), rgba(255, 255, 255, 0)),
        linear-gradient(#dfe3ee, #dcdfea 40%, #d9dce7 50%, #f0f1f4 62%, #fafafa 70%, #fff 80%);
}
.model {
    position: absolute;
    inset: 0 auto auto -1px;
    width: 100%;
    height: 100%;
}
.loads {
    fill: #00f000;
    stroke: #0a8a0a;
    stroke-width: 0.5px;
}
.callout {
    fill: none;
    stroke: #333;
}
.callout .box {
    fill: #fff;
    stroke: #000;
}
.callout circle {
    fill: #fff;
}
.callout .hit {
    fill: #bbb;
}
.callout text {
    fill: #000;
    stroke: none;
    font-size: 11px;
}
.plot-info {
    position: absolute;
    top: 27px;
    left: 16px;
    color: #000;
    line-height: 13px;
}
.plot-info p {
    margin: 0;
}
.hud, .window-buttons {
    position: absolute;
    top: 5px;
    display: flex;
    gap: 6px;
}
.hud {
    left: 392px;
}
.hud button {
    display: flex;
    align-items: center;
    gap: 6px;
}
.window-buttons {
    right: 13px;
    opacity: 0.8;
}
.legend {
    position: absolute;
    top: 62px;
    right: 0;
    width: 123px;
    overflow: hidden;
    color: #000;
}
.legend h2 {
    margin: 0;
    font-size: 11px;
    font-weight: 400;
    line-height: 14px;
    white-space: nowrap;
}
.legend-body {
    display: flex;
    padding-top: 6px;
}
.bar {
    position: relative;
    width: 24px;
    height: 313px;
    margin: 16px 12px 8px 0;
    border-bottom: 1px solid red;
    background: linear-gradient(#f00, #ff0 25%, #0f0 50%, #0ff 75%, #00f);
}
/* tick marks */
.bar::after {
    content: "";
    position: absolute;
    top: 0;
    left: 24px;
    width: 3px;
    height: 313px;
    background: repeating-linear-gradient(red 0 1px, transparent 1px 26px);
}
.legend li {
    line-height: 26px;
}
.sponsor {
    position: absolute;
    left: 3px;
    bottom: 0;
    display: flex;
    flex-direction: column;
    align-items: center;
    width: 300px;
    height: 161px;
    padding-top: 5px;
    background: #fff;
    font-style: italic;
    white-space: nowrap;
}
.globe {
    width: 110px;
    height: 106px;
}
.sponsor strong {
    font-family: 'Liberation Serif', serif;
    font-size: 17px;
    line-height: 24px;
    color: #000040;
}
.sponsor span {
    font-family: 'Liberation Sans', sans-serif;
    font-size: 11px;
    line-height: 22px;
    color: #e04010;
}
.flyout {
    position: absolute;
    top: 268px;
    left: -1px;
    display: flex;
    align-items: center;
    width: 9px;
    height: 38px;
    border: 1px solid #888;
    border-left: 0;
    background: #f7f7f7;
}
```
